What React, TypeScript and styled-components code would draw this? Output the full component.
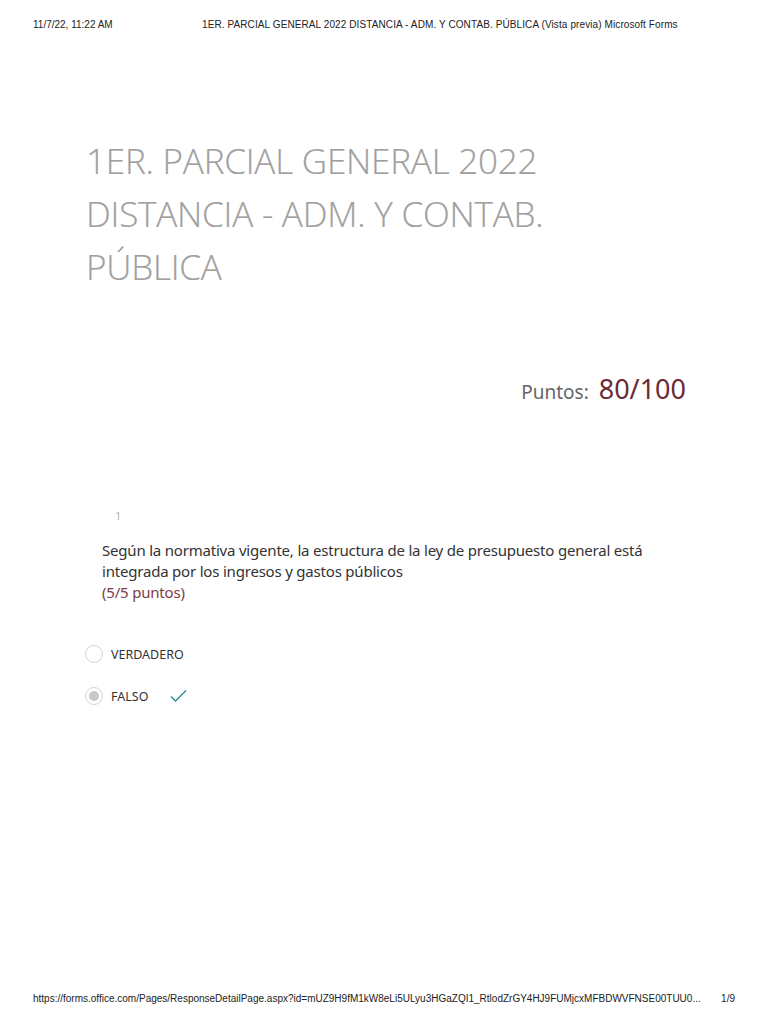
import styled, { createGlobalStyle } from 'styled-components';

const GlobalStyle = createGlobalStyle`
  html, body {
    margin: 0;
    padding: 0;
    background: #ffffff;
  }
  body {
    font-family: "Noto Sans", "Open Sans", sans-serif;
  }
`;

const Page = styled.div`
  width: 768px;
  height: 1024px;
  display: flex;
  flex-direction: column;
  background: #fff;
  overflow: hidden;
`;

const PrintBar = styled.div`
  display: flex;
  align-items: center;
  padding: 0 33px;
  height: 10px;
  font-family: "Liberation Sans", Arial, sans-serif;
  font-size: 10px;
  color: #222;
  white-space: nowrap;
`;

const HeaderBar = styled(PrintBar)`
  margin-top: 19px;
`;

const FooterBar = styled(PrintBar)`
  margin-top: auto;
  margin-bottom: 21px;
  justify-content: space-between;
`;

const HeaderTitle = styled.span`
  flex: 1;
  text-align: center;
  padding-left: 32px;
  letter-spacing: 0.1px;
`;

const Content = styled.main`
  padding: 0 82px 0 86px;
`;

const Title = styled.h1`
  margin: 105px 0 0;
  font-family: "Open Sans", "Noto Sans", sans-serif;
  font-weight: 300;
  font-size: 35px;
  line-height: 53px;
  color: #a0a0a0;
  letter-spacing: -0.2px;
  -webkit-text-stroke: 0.2px #a0a0a0;
`;

const Score = styled.div`
  display: flex;
  justify-content: flex-end;
  align-items: baseline;
  gap: 10px;
  margin-top: 77px;
`;

const ScoreLabel = styled.span`
  font-size: 19px;
  color: #666;
`;

const ScoreValue = styled.span`
  font-size: 27px;
  color: #6b2a35;
`;

const Question = styled.section`
  margin-top: 101px;
`;

const QNumber = styled.div`
  padding-left: 29px;
  font-size: 11px;
  color: #b3b3b3;
`;

const QText = styled.p`
  margin: 17px 0 0 16px;
  font-size: 15px;
  line-height: 21px;
  color: #333;
  letter-spacing: -0.2px;
`;

const QPoints = styled.span`
  display: block;
  color: #7d3c47;
`;

const Options = styled.div`
  display: flex;
  flex-direction: column;
  gap: 22px;
  margin-top: 41px;
`;

const Option = styled.label`
  display: flex;
  align-items: center;
  gap: 8px;
  height: 20px;
  font-size: 12.5px;
  color: #333;
`;

const Radio = styled.span<{ $checked?: boolean }>`
  width: 16px;
  height: 16px;
  margin-left: -1px;
  border-radius: 50%;
  border: 1px solid #d4d4d4;
  background: #fff;
  display: flex;
  align-items: center;
  justify-content: center;
  &::after {
    content: '';
    width: 10px;
    height: 10px;
    border-radius: 50%;
    background: ${p => (p.$checked ? '#c8c8c8' : 'transparent')};
  }
`;

const Check = styled.svg`
  margin-left: 14px;
  width: 17px;
  height: 14px;
`;

export default function App() {
  return (
    <Page>
      <GlobalStyle />
      <HeaderBar>
        <span>11/7/22, 11:22 AM</span>
        <HeaderTitle>1ER. PARCIAL GENERAL 2022 DISTANCIA - ADM. Y CONTAB. PÚBLICA (Vista previa) Microsoft Forms</HeaderTitle>
      </HeaderBar>
      <Content>
        <Title>
          1ER. PARCIAL GENERAL 2022
          <br />
          DISTANCIA - ADM. Y CONTAB.
          <br />
          PÚBLICA
        </Title>
        <Score>
          <ScoreLabel>Puntos:</ScoreLabel>
          <ScoreValue>80/100</ScoreValue>
        </Score>
        <Question>
          <QNumber>1</QNumber>
          <QText>
            Según la normativa vigente, la estructura de la ley de presupuesto general está integrada por los ingresos y gastos públicos
            <QPoints>(5/5 puntos)</QPoints>
          </QText>
          <Options>
            <Option>
              <Radio />
              VERDADERO
            </Option>
            <Option>
              <Radio $checked />
              FALSO
              <Check viewBox="0 0 17 14">
                <path d="M1 7.5 L5.5 12 L16 1.5" fill="none" stroke="#2b8c8f" strokeWidth="1.4" />
              </Check>
            </Option>
          </Options>
        </Question>
      </Content>
      <FooterBar>
        <span>https://forms.office.com/Pages/ResponseDetailPage.aspx?id=mUZ9H9fM1kW8eLi5ULyu3HGaZQI1_RtlodZrGY4HJ9FUMjcxMFBDWVFNSE00TUU0...</span>
        <span>1/9</span>
      </FooterBar>
    </Page>
  );
}
